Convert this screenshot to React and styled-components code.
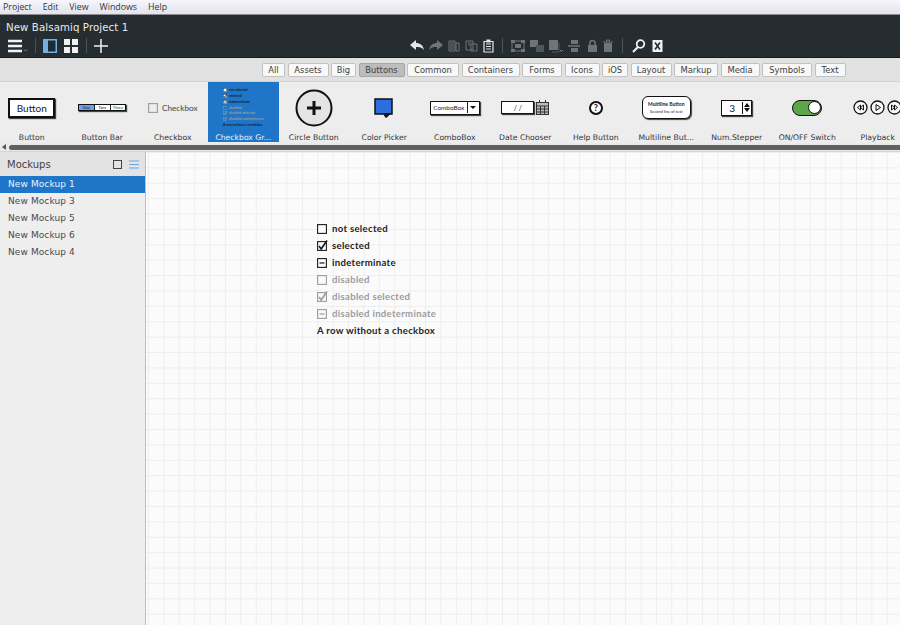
import React from 'react';
import styled, { createGlobalStyle } from 'styled-components';

const GlobalStyle = createGlobalStyle`
  html, body, #root {
    margin: 0;
    height: 100%;
  }
  body {
    overflow: hidden;
    font-family: "DejaVu Sans", sans-serif;
    background: #fbfbfb;
  }
`;

const Page = styled.div`
  display: flex;
  flex-direction: column;
  width: 900px;
  height: 625px;
  overflow: hidden;
`;

const MenuBar = styled.div`
  display: flex;
  flex: none;
  gap: 11px;
  height: 14px;
  padding-left: 3px;
  align-items: center;
  background: linear-gradient(#f6f6fb, #e2e3ec);
  border-bottom: 1px solid #8b8d90;
  font: 8.8px "Open Sans", sans-serif;
  color: #33363a;
`;

const DarkBar = styled.div`
  flex: none;
  height: 43px;
  background: #262d30;
  color: #e8eaea;
  border-bottom: 1px solid #15191b;
  box-sizing: border-box;
`;

const Title = styled.div`
  padding: 5px 0 0 6px;
  height: 15px;
  font-size: 10.2px;
  line-height: 15px;
  letter-spacing: 0.1px;
`;

const ToolRow = styled.div`
  display: flex;
  align-items: center;
  height: 17px;
  margin-top: 2px;
  padding-left: 8px;
`;

const ToolGroup = styled.div`
  display: flex;
  align-items: center;
  gap: ${p => p.$gap || 5}px;
  margin-left: ${p => p.$left || 0}px;
`;

const ToolSep = styled.span`
  flex: none;
  width: 1px;
  height: 15px;
  margin: 0 ${p => p.$space || 7}px;
  background: #4b5357;
`;

const TabRow = styled.div`
  display: flex;
  flex: none;
  gap: 2.5px;
  height: 24px;
  padding: 5px 0 0 262px;
  box-sizing: border-box;
  background: #e1e1e1;
  border-bottom: 1px solid #d2d2d2;
`;

const Tab = styled.div`
  flex: none;
  width: ${p => p.$width}px;
  height: 14px;
  box-sizing: border-box;
  text-align: center;
  font-size: 8.4px;
  line-height: 12px;
  color: #3f3f3f;
  background: ${p => (p.$active ? '#bdbdbd' : '#f8f8f8')};
  border: 1px solid ${p => (p.$active ? '#a6a6a6' : '#c2c2c2')};
  border-radius: 2px;
`;

const Library = styled.div`
  display: flex;
  flex: none;
  height: 61px;
  overflow: hidden;
  background: #ededed;
`;

const LibItem = styled.div`
  display: flex;
  flex: none;
  flex-direction: column;
  align-items: center;
  width: 70.5px;
  height: 60px;
  overflow: hidden;
  margin-left: ${p => (p.$first ? -3.5 : 0)}px;
  background: ${p => (p.$selected ? '#1f76c8' : 'transparent')};
  color: ${p => (p.$selected ? '#eaf3fb' : '#333')};
`;

const Preview = styled.div`
  display: flex;
  align-items: center;
  justify-content: center;
  height: 51px;
  width: 100%;
  flex: none;
`;

const LibLabel = styled.div`
  font-size: 7.7px;
  line-height: 9px;
  white-space: nowrap;
`;

const ScrollTrack = styled.div`
  display: flex;
  flex: none;
  align-items: center;
  gap: 3px;
  height: 8px;
  padding-left: 2px;
  background: #e9e9e9;
  border-bottom: 1px solid #d4d4d4;
`;

const ScrollArrow = styled.span`
  width: 0;
  height: 0;
  border-top: 3px solid transparent;
  border-bottom: 3px solid transparent;
  border-right: 4px solid #555;
`;

const ScrollThumb = styled.span`
  flex: 1;
  height: 5px;
  border-radius: 3px 0 0 3px;
  background: #606060;
`;

const Workspace = styled.div`
  display: flex;
  flex: 1;
  min-height: 0;
`;

const Sidebar = styled.div`
  flex: none;
  width: 146px;
  box-sizing: border-box;
  background: #eeeeee;
  border-right: 1px solid #bdbdbd;
`;

const SideHead = styled.div`
  display: flex;
  align-items: center;
  height: 24px;
  padding: 0 6px 0 7px;
  background: #e3e3e3;
  font-size: 10px;
  color: #444;
`;

const SideTitle = styled.span`
  flex: 1;
`;

const SideIcons = styled.div`
  display: flex;
  align-items: center;
  gap: 7px;
`;

const MockupRow = styled.div`
  height: 17px;
  padding-left: 8px;
  font-size: 9px;
  line-height: 17px;
  letter-spacing: 0.1px;
  background: ${p => (p.$active ? '#1f76c8' : 'transparent')};
  color: ${p => (p.$active ? '#e8f2fb' : '#4a4a4a')};
`;

const Canvas = styled.div`
  flex: 1;
  padding: 68px 0 0 171px;
  background-color: #fbfbfb;
  background-image:
    linear-gradient(#eeeeee 1px, transparent 1px),
    linear-gradient(90deg, #eeeeee 1px, transparent 1px);
  background-size: 15.4px 15.4px;
  background-position: 2px 0;
`;

const CheckGroup = styled.div`
  display: flex;
  flex-direction: column;
  align-items: flex-start;
`;

const CheckRow = styled.div`
  display: flex;
  align-items: center;
  gap: ${p => (p.$mini ? 2 : 5)}px;
  height: ${p => (p.$mini ? 5.7 : 17)}px;
  font-family: "Lato", sans-serif;
  font-weight: 700;
  font-size: ${p => (p.$mini ? 3.4 : 9.6)}px;
  letter-spacing: ${p => (p.$mini ? 0 : 0.3)}px;
  white-space: nowrap;
  color: ${p => (p.$disabled ? '#9b9ca0' : p.$mini ? '#15202b' : '#232326')};
`;

const PreviewCheck = styled.div`
  display: flex;
  align-items: center;
  gap: 4px;
  font-family: "Lato", sans-serif;
  font-size: 8.2px;
  color: #444;
`;

const SketchButton = styled.div`
  width: ${p => p.$w}px;
  height: ${p => p.$h}px;
  box-sizing: border-box;
  display: flex;
  align-items: center;
  justify-content: center;
  background: #fff;
  border: ${p => p.$border || 1.5}px solid #111;
  border-radius: ${p => p.$radius || 0}px;
  box-shadow: ${p => (p.$flat ? 'none' : '1px 1px 1px #444')};
  color: #222;
  font-size: ${p => p.$size || 8}px;
  font-weight: ${p => p.$weight || 400};
  font-family: "Lato", sans-serif;
`;

const BarPart = styled.span`
  flex: 1;
  height: 100%;
  text-align: center;
  font-size: 4px;
  line-height: 5px;
  background: ${p => (p.$on ? '#6f9fe4' : '#fff')};
  border-right: ${p => (p.$last ? 0 : 1)}px solid #222;
`;

const ComboText = styled.span`
  flex: 1;
  text-align: center;
  font-size: 6.4px;
  line-height: 11px;
  border-right: 1px solid #222;
`;

const ComboArrow = styled.span`
  width: 0;
  height: 0;
  margin: 0 2.5px;
  border-left: 3px solid transparent;
  border-right: 3px solid transparent;
  border-top: 3px solid #111;
`;

const DateRow = styled.div`
  display: flex;
  align-items: center;
  gap: 2px;
`;

const MultiLine = styled.div`
  font-size: 5px;
  line-height: 8px;
  text-align: center;
  font-weight: 700;
`;

const MultiSub = styled.div`
  font-size: 4px;
  font-weight: 400;
`;

const StepValue = styled.span`
  flex: 1;
  text-align: center;
  font-size: 10px;
  border-right: 1px solid #111;
`;

const StepArrows = styled.span`
  display: flex;
  flex-direction: column;
  align-items: center;
  gap: 1px;
  width: 8px;
`;

const StepTri = styled.span`
  width: 0;
  height: 0;
  border-left: 3.5px solid transparent;
  border-right: 3.5px solid transparent;
  border-${p => p.$dir}: 4px solid #111;
`;

const Toggle = styled.div`
  display: flex;
  justify-content: flex-end;
  width: 30px;
  height: 16px;
  box-sizing: border-box;
  background: #5ca548;
  border: 1.5px solid #111;
  border-radius: 8px;
`;

const Knob = styled.span`
  width: 13px;
  height: 13px;
  box-sizing: border-box;
  background: #fff;
  border: 1.5px solid #111;
  border-radius: 50%;
`;

const PlayRow = styled.div`
  display: flex;
  gap: 2px;
`;

function Icon({ w = 14, h = 14, children }) {
  return (
    <svg width={w} height={h} viewBox={`0 0 ${w} ${h}`} style={{ display: 'block', flex: 'none' }}>
      {children}
    </svg>
  );
}

function CheckBox({ state, disabled, mini }) {
  const c = disabled ? '#9b9ca0' : mini ? '#10202f' : '#1c1c1e';
  const s = mini ? 4 : 10;
  return (
    <svg width={s} height={s} viewBox="0 0 10 10" style={{ flex: 'none', overflow: 'visible' }}>
      <rect x="0.6" y="0.6" width="8.8" height="8.8" fill={disabled ? 'none' : '#fdfdfd'} stroke={c} strokeWidth="1.1" />
      {state === 'checked' && <path d="M2 5 L4.2 8 L10 -0.5" fill="none" stroke={c} strokeWidth="1.7" />}
      {state === 'mixed' && <path d="M2.5 5 H7.5" stroke={c} strokeWidth="1.2" />}
    </svg>
  );
}

const checkRows = [
  { text: 'not selected' },
  { text: 'selected', state: 'checked' },
  { text: 'indeterminate', state: 'mixed' },
  { text: 'disabled', disabled: true },
  { text: 'disabled selected', state: 'checked', disabled: true },
  { text: 'disabled indeterminate', state: 'mixed', disabled: true },
  { text: 'A row without a checkbox', plain: true },
];

function CheckList({ mini }) {
  return (
    <CheckGroup>
      {checkRows.map(row => (
        <CheckRow key={row.text} $disabled={row.disabled} $mini={mini}>
          {!row.plain && <CheckBox state={row.state} disabled={row.disabled} mini={mini} />}
          {row.text}
        </CheckRow>
      ))}
    </CheckGroup>
  );
}

function PlayCircle({ kind }) {
  return (
    <Icon w={15} h={15}>
      <circle cx="7.5" cy="7.5" r="6.5" fill="#f7f7f7" stroke="#111" strokeWidth="1.3" />
      {kind === 'back' && <path d="M7.5 5 L4.5 7.5 L7.5 10 Z M10.5 5 L7.5 7.5 L10.5 10 Z" fill="none" stroke="#111" />}
      {kind === 'play' && <path d="M6 4.5 L10.5 7.5 L6 10.5 Z" fill="none" stroke="#111" />}
      {kind === 'next' && <path d="M4.5 5 L7.5 7.5 L4.5 10 Z M7.5 5 L10.5 7.5 L7.5 10 Z" fill="none" stroke="#111" />}
    </Icon>
  );
}

const tabs = [
  ['All', 23], ['Assets', 41], ['Big', 25], ['Buttons', 46], ['Common', 52], ['Containers', 58],
  ['Forms', 40], ['Icons', 35], ['iOS', 26], ['Layout', 41], ['Markup', 44], ['Media', 39],
  ['Symbols', 50], ['Text', 31],
];

const library = [
  {
    label: 'Button',
    preview: <SketchButton $w={47} $h={20} $border={2} $size={10}>Button</SketchButton>,
  },
  {
    label: 'Button Bar',
    preview: (
      <SketchButton $w={48} $h={7} $border={1}>
        <BarPart $on>One</BarPart><BarPart>Two</BarPart><BarPart $last>Three</BarPart>
      </SketchButton>
    ),
  },
  {
    label: 'Checkbox',
    preview: (
      <PreviewCheck>
        <CheckBox disabled />Checkbox
      </PreviewCheck>
    ),
  },
  { label: 'Checkbox Gr...', selected: true, preview: <CheckList mini /> },
  {
    label: 'Circle Button',
    preview: (
      <Icon w={38} h={38}>
        <circle cx="19" cy="19" r="17.5" fill="#e4e4e4" stroke="#111" strokeWidth="2" />
        <path d="M19 12 V26 M12 19 H26" stroke="#111" strokeWidth="3" />
      </Icon>
    ),
  },
  {
    label: 'Color Picker',
    preview: (
      <Icon w={20} h={20}>
        <path d="M1 1 H18 V16 H14 L12 19 L10 16 H1 Z" fill="#2a6ee0" stroke="#111" strokeWidth="1.5" />
        <path d="M10 15 H17 L13.5 19 Z" fill="#111" />
      </Icon>
    ),
  },
  {
    label: 'ComboBox',
    preview: (
      <SketchButton $w={50} $h={14} $border={1} $size={7}>
        <ComboText>ComboBox</ComboText><ComboArrow />
      </SketchButton>
    ),
  },
  {
    label: 'Date Chooser',
    preview: (
      <DateRow>
        <SketchButton $w={33} $h={13} $size={7}>/ /</SketchButton>
        <Icon w={13} h={15}>
          <rect x="0.5" y="2.5" width="12" height="12" fill="#bbb" stroke="#333" />
          <path d="M0.5 6 H12.5 M0.5 9 H12.5 M0.5 12 H12.5 M4.5 6 V14 M8.5 6 V14 M3.5 0 V3 M9.5 0 V3" stroke="#333" fill="none" />
        </Icon>
      </DateRow>
    ),
  },
  {
    label: 'Help Button',
    preview: <SketchButton $w={14} $h={14} $border={2} $radius={7} $size={9} $weight={900} $flat>?</SketchButton>,
  },
  {
    label: 'Multiline But...',
    preview: (
      <SketchButton $w={49} $h={23} $radius={6}>
        <MultiLine>Multiline Button<MultiSub>Second line of text</MultiSub></MultiLine>
      </SketchButton>
    ),
  },
  {
    label: 'Num.Stepper',
    preview: (
      <SketchButton $w={31} $h={16}>
        <StepValue>3</StepValue>
        <StepArrows><StepTri $dir="bottom" /><StepTri $dir="top" /></StepArrows>
      </SketchButton>
    ),
  },
  {
    label: 'ON/OFF Switch',
    preview: <Toggle><Knob /></Toggle>,
  },
  {
    label: 'Playback',
    preview: (
      <PlayRow>
        <PlayCircle kind="back" /><PlayCircle kind="play" /><PlayCircle kind="next" />
      </PlayRow>
    ),
  },
];

const mockups = ['New Mockup 1', 'New Mockup 3', 'New Mockup 5', 'New Mockup 6', 'New Mockup 4'];

const dim = '#6e7477';

export default function App() {
  return (
    <Page>
      <GlobalStyle />
      <MenuBar>
        {['Project', 'Edit', 'View', 'Windows', 'Help'].map(m => <span key={m}>{m}</span>)}
      </MenuBar>
      <DarkBar>
        <Title>New Balsamiq Project 1</Title>
        <ToolRow>
          <Icon w={20} h={14}>
            <path d="M0 2 H14 M0 7 H14 M0 12 H14" stroke="#f1f1f1" strokeWidth="2.4" />
            <path d="M16 10.5 L17.5 12 L19 10.5" stroke="#888" fill="none" />
          </Icon>
          <ToolSep $space={7} />
          <ToolGroup $gap={7}>
            <Icon>
              <rect x="0.75" y="0.75" width="12.5" height="12.5" fill="#1d2a33" stroke="#6fb0e6" strokeWidth="1.5" />
              <rect x="1" y="1" width="4" height="12" fill="#6fb0e6" />
            </Icon>
            <Icon>
              <path d="M0 0 H6 V6 H0 Z M8 0 H14 V6 H8 Z M0 8 H6 V14 H0 Z M8 8 H14 V14 H8 Z" fill="#f1f1f1" />
            </Icon>
          </ToolGroup>
          <ToolSep $space={7.5} />
          <Icon>
            <path d="M7 0 V14 M0 7 H14" stroke="#f1f1f1" strokeWidth="1.5" />
          </Icon>
          <ToolGroup $gap={5} $left={302}>
            <Icon>
              <path d="M0 6 L6 1 V4 C10 4 13 6 14 11 C12 8.5 10 8 6 8 V11 Z" fill="#e6e6e6" />
            </Icon>
            <Icon>
              <path d="M14 6 L8 1 V4 C4 4 1 6 0 11 C2 8.5 4 8 8 8 V11 Z" fill={dim} />
            </Icon>
            <Icon w={12}>
              <path d="M1 2 H7 V12 H1 Z M8 4 H11 V12 H8 Z M2 4 H6 M2 6 H6 M2 8 H6 M2 10 H6" fill="none" stroke={dim} />
            </Icon>
            <Icon w={13}>
              <path d="M1 2 H8 V11 H1 Z M6 5 H12 V12 H6 Z M3 4 H6 M3 6 H5" fill="none" stroke={dim} />
            </Icon>
            <Icon w={11}>
              <path d="M1 2.5 H10 V13 H1 Z M3 5 H8 M3 7.5 H8 M3 10 H8" fill="none" stroke="#e6e6e6" strokeWidth="1.2" />
              <rect x="3.5" y="0.5" width="4" height="3" fill="#e6e6e6" />
            </Icon>
          </ToolGroup>
          <ToolSep $space={8} />
          <ToolGroup $gap={5}>
            <Icon>
              <path d="M1 2 H13 V12 H1 Z" fill="none" stroke={dim} />
              <path d="M0 1 H4 V4 H0 Z M10 1 H14 V4 H10 Z M0 10 H4 V13 H0 Z M10 10 H14 V13 H10 Z M4 5 H10 V9 H4 Z" fill={dim} />
            </Icon>
            <Icon>
              <path d="M0 1 H8 V8 H0 Z" fill={dim} />
              <path d="M6 6 H14 V13 H6 Z" fill="#50575a" />
            </Icon>
            <Icon>
              <path d="M0 1 H9 V11 H0 Z" fill={dim} />
              <path d="M10 4 V13 H3" fill="none" stroke="#50575a" />
              <path d="M11 11 L12.5 12.5 L14 11" fill="none" stroke="#888" />
            </Icon>
            <Icon>
              <path d="M3 1 H10 V5 H3 Z M3 9 H10 V13 H3 Z" fill={dim} />
              <path d="M0 7 H12" stroke={dim} strokeWidth="1.5" />
            </Icon>
            <Icon w={11}>
              <path d="M3 6 V4 A2.5 2.5 0 0 1 8 4 V6" fill="none" stroke={dim} strokeWidth="1.5" />
              <rect x="1" y="6" width="9" height="7" fill={dim} />
            </Icon>
            <Icon w={10}>
              <path d="M0 3 H10 M3.5 3 V1 H6.5 V3" stroke={dim} fill="none" />
              <path d="M1 4 H9 V13 H1 Z" fill={dim} />
            </Icon>
          </ToolGroup>
          <ToolSep $space={9} />
          <ToolGroup $gap={6}>
            <Icon>
              <circle cx="8.5" cy="5" r="3.8" fill="none" stroke="#f1f1f1" strokeWidth="1.8" />
              <path d="M6 8 L1 13" stroke="#f1f1f1" strokeWidth="2.2" />
            </Icon>
            <Icon w={11}>
              <path d="M0.5 1 H10.5 V13 H0.5 Z" fill="#f1f1f1" />
              <path d="M3 3.5 L8 10.5 M8 3.5 L3 10.5" stroke="#262d30" strokeWidth="1.6" />
            </Icon>
          </ToolGroup>
        </ToolRow>
      </DarkBar>
      <TabRow>
        {tabs.map(([name, width]) => (
          <Tab key={name} $width={width} $active={name === 'Buttons'}>{name}</Tab>
        ))}
      </TabRow>
      <Library>
        {library.map((item, i) => (
          <LibItem key={item.label} $first={i === 0} $selected={item.selected}>
            <Preview>{item.preview}</Preview>
            <LibLabel>{item.label}</LibLabel>
          </LibItem>
        ))}
      </Library>
      <ScrollTrack>
        <ScrollArrow />
        <ScrollThumb />
      </ScrollTrack>
      <Workspace>
        <Sidebar>
          <SideHead>
            <SideTitle>Mockups</SideTitle>
            <SideIcons>
              <Icon w={9} h={9}>
                <rect x="0.5" y="0.5" width="8" height="8" fill="none" stroke="#444" />
              </Icon>
              <Icon w={10} h={9}>
                <path d="M0 1 H10 M0 4.5 H10 M0 8 H10" stroke="#6ba7dd" />
              </Icon>
            </SideIcons>
          </SideHead>
          {mockups.map((m, i) => <MockupRow key={m} $active={i === 0}>{m}</MockupRow>)}
        </Sidebar>
        <Canvas>
          <CheckList />
        </Canvas>
      </Workspace>
    </Page>
  );
}
